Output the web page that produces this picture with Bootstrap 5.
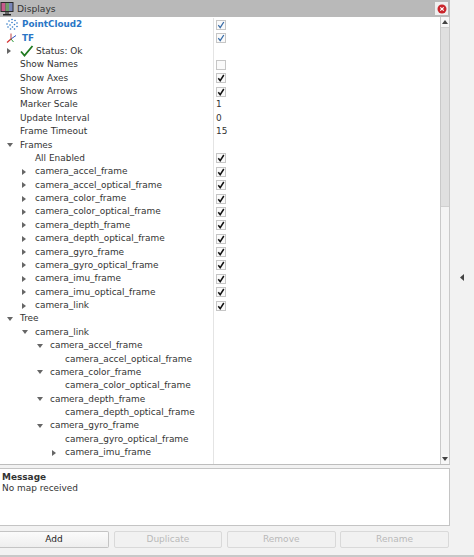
<!DOCTYPE html>
<html lang="en">
<head>
<meta charset="utf-8">
<title>Displays</title>
<link href="https://cdn.jsdelivr.net/npm/bootstrap@5.3.0/dist/css/bootstrap.min.css" rel="stylesheet">
<style>
html,body{height:557px;overflow:hidden}
body{background:#f2f2f2;font-family:"DejaVu Sans",sans-serif;font-size:8.95px;color:#333;line-height:13px}
.shell{height:557px}
.dock{width:450px}
.titlebar{height:17px;background:#b9b9b9}
.titletext{font-size:9.2px;color:#333;padding-left:3px}
.closebtn{width:13px;height:13px;background:#efefef;margin-right:2px}
.treebox{height:448px;background:#fff;border-bottom:1px solid #bdbdbd}
.treemain{width:440px;overflow:hidden;padding-top:1px}
.trow{height:13.38px;flex:none}
.namecol{width:214px;flex:none;border-right:1px solid #e4e4e4;height:100%;white-space:nowrap}
.treefill{flex:1 1 0;min-height:0}
.valcol{padding-left:2px}
.caretbox{width:10px;flex:none}
.lv0{padding-left:7px}.lv0n{padding-left:20px}
.lv1{padding-left:22px}.lv1n{padding-left:35px}
.lv2{padding-left:37px}.lv2n{padding-left:50px}
.lv3{padding-left:52px}.lv3n{padding-left:65px}
.dname{color:#2a76c6;font-weight:700;font-size:8.8px;padding-left:3px}
.cbox{width:10px;height:10px;border:1px solid #c6c6c6;background:#fafafa;display:flex;align-items:center;justify-content:center}
.scrollv{width:10px;background:#e3e3e3;border-left:1px solid #c9c9c9;border-right:1px solid #c9c9c9}
.sarrow{height:10px;background:#f7f7f7}
.sthumb{height:180px;background:#e0e0e0;border-top:1px solid #d0d0d0;border-bottom:1px solid #d0d0d0}
.strack{background:#f4f4f4}
.msgbox{height:58px;margin-top:3px;background:#fff;border:1px solid #c4c4c4;border-left:0;padding:3px 2px;line-height:10.5px}
.msghead{font-weight:700}
.btnrow{margin-top:5px;gap:4.5px;padding-right:1px}
.qbtn{height:17px;flex:1 1 0;padding:0;font-size:9px;line-height:13px;border:1px solid #c4c4c4;border-radius:2px;background:linear-gradient(#fbfbfb,#eeeeee);color:#222}
.qbtn:disabled{background:#f1f1f1;border-color:#d9d9d9;color:#b9b9b9;opacity:1}
.firstbtn{border-left:0;border-radius:0 2px 2px 0;flex:0 0 109px}
.sidebar{width:24px}
.footbar{height:2px;background:#c8c8c8;margin-top:auto}
</style>
</head>
<body>
<div class="shell d-flex flex-column">
<div class="d-flex flex-grow-1">
<div class="dock d-flex flex-column">
  <div class="titlebar d-flex align-items-center">
    <svg width="14" height="15" viewBox="0 0 14 15"><rect x="0.5" y="1" width="13" height="10" fill="#2b2b2b"/><rect x="1.5" y="2" width="4" height="8" fill="#c75b8c"/><rect x="5.5" y="2" width="3.5" height="8" fill="#6f9f6a"/><rect x="9" y="2" width="3.5" height="8" fill="#7a86b8"/><rect x="5" y="11" width="4" height="2" fill="#666"/><rect x="3" y="13" width="8" height="1.5" fill="#222"/></svg>
    <span class="titletext flex-grow-1">Displays</span>
    <span class="closebtn d-flex align-items-center justify-content-center"><svg width="10" height="10" viewBox="0 0 10 10"><circle cx="5" cy="5" r="4.5" fill="#c9252b"/><path d="M3.3 3.3l3.4 3.4M6.7 3.3l-3.4 3.4" stroke="#fff" stroke-width="1.2"/></svg></span>
  </div>
  <div class="treebox d-flex">
    <div class="treemain d-flex flex-column" id="tree"></div>
    <div class="scrollv d-flex flex-column">
      <div class="sarrow d-flex justify-content-center align-items-center"><svg width="6" height="4" viewBox="0 0 6 4"><path d="M0 4L3 0l3 4z" fill="#444"/></svg></div>
      <div class="sthumb"></div>
      <div class="strack flex-grow-1"></div>
      <div class="sarrow d-flex justify-content-center align-items-center"><svg width="6" height="4" viewBox="0 0 6 4"><path d="M0 0L3 4l3-4z" fill="#444"/></svg></div>
    </div>
  </div>
  <div class="msgbox"><div class="msghead">Message</div><div>No map received</div></div>
  <div class="btnrow d-flex">
    <button class="qbtn firstbtn" type="button">Add</button>
    <button class="qbtn" type="button" disabled>Duplicate</button>
    <button class="qbtn" type="button" disabled>Remove</button>
    <button class="qbtn" type="button" disabled>Rename</button>
  </div>
</div>
<div class="sidebar d-flex align-items-center justify-content-center"><svg width="4" height="7" viewBox="0 0 4 7"><path d="M4 0L0 3.5 4 7z" fill="#444"/></svg></div>
</div>
<div class="footbar"></div>
</div>
<script>
var R='<svg width="4" height="6" viewBox="0 0 4 6"><path d="M0 0l4 3L0 6z" fill="#666"/></svg>';
var D='<svg width="6" height="4" viewBox="0 0 6 4"><path d="M0 0h6L3 4z" fill="#666"/></svg>';
var CK='<svg width="8" height="8" viewBox="0 0 8 8"><path d="M1.3 4.2L3.2 6.6 6.8 1" fill="none" stroke="#111" stroke-width="1.5"/></svg>';
var CB='<svg width="8" height="8" viewBox="0 0 8 8"><path d="M1.3 4.2L3.2 6.6 6.8 1" fill="none" stroke="#3b6ea8" stroke-width="1.3"/></svg>';
function box(c){return '<span class="cbox">'+(c||'')+'</span>'}
var PC='<svg width="14" height="13" viewBox="0 0 14 13" fill="#2a76c6"><circle cx="7" cy="1.5" r=".8"/><circle cx="10" cy="2.5" r=".8"/><circle cx="4" cy="3" r=".8"/><circle cx="12" cy="5" r=".8"/><circle cx="7" cy="4.5" r=".8"/><circle cx="2" cy="6" r=".8"/><circle cx="9.5" cy="6.5" r=".8"/><circle cx="5" cy="7" r=".8"/><circle cx="12" cy="8.5" r=".8"/><circle cx="3" cy="9" r=".8"/><circle cx="7.5" cy="9" r=".8"/><circle cx="5.5" cy="11" r=".8"/><circle cx="9.5" cy="11" r=".8"/></svg>';
var TF='<svg width="14" height="13" viewBox="0 0 14 13" fill="none"><path d="M6 7L11 3.5" stroke="#3050c0" stroke-width="1"/><path d="M6 7L2 10.5" stroke="#d43030" stroke-width="1.2"/><path d="M6 7L6 1.5" stroke="#c04040" stroke-width="1"/><path d="M6 7L8.5 10" stroke="#2a9a3a" stroke-width="1"/></svg>';
var GC='<svg width="14" height="12" viewBox="0 0 14 12"><path d="M1 6.5L4.5 10.5 12.5 1" fill="none" stroke="#1f7a1f" stroke-width="1.8"/></svg>';
var rows=[
 ['d',PC,'PointCloud2',box(CB)],
 ['d',TF,'TF',box(CB)],
 ['s'],
 [0,'','Show Names',box()],
 [0,'','Show Axes',box(CK)],
 [0,'','Show Arrows',box(CK)],
 [0,'','Marker Scale','1'],
 [0,'','Update Interval','0'],
 [0,'','Frame Timeout','15'],
 [0,D,'Frames',''],
 [1,'','All Enabled',box(CK)]];
['accel','accel_optical','color','color_optical','depth','depth_optical','gyro','gyro_optical','imu','imu_optical'].forEach(function(n){rows.push([1,R,'camera_'+n+'_frame',box(CK)])});
rows.push([1,R,'camera_link',box(CK)]);
rows.push([0,D,'Tree','']);
rows.push([1,D,'camera_link','']);
['accel','color','depth','gyro'].forEach(function(a){rows.push([2,D,'camera_'+a+'_frame','']);rows.push([3,'','camera_'+a+'_optical_frame','']);});
rows.push([3,R,'camera_imu_frame','']);
var h='';
rows.forEach(function(r){
 var name,val='';
 if(r[0]==='d'){name='<div class="d-flex align-items-center h-100" style="padding-left:5px">'+r[1]+'<span class="dname">'+r[2]+'</span></div>';val=r[3];}
 else if(r[0]==='s'){name='<div class="d-flex align-items-center h-100 lv0"><span class="caretbox d-flex align-items-center" style="margin-right:3px">'+R+'</span><span class="d-flex" style="margin-right:2px">'+GC+'</span><span>Status: Ok</span></div>';}
 else{
  var l=r[0];
  if(r[1]){name='<div class="d-flex align-items-center h-100 lv'+l+'"><span class="caretbox d-flex align-items-center" style="margin-right:3px">'+r[1]+'</span><span>'+r[2]+'</span></div>';}
  else{var p=(l===3)?'lv3n':(l===1?'lv1n':'lv0n');name='<div class="d-flex align-items-center h-100 '+p+'"><span>'+r[2]+'</span></div>';}
  val=r[3];
 }
 h+='<div class="trow d-flex"><div class="namecol">'+name+'</div><div class="valcol d-flex align-items-center">'+val+'</div></div>';
});
h+='<div class="namecol treefill"></div>';
document.getElementById('tree').innerHTML=h;
</script>
<script src="https://cdn.jsdelivr.net/npm/bootstrap@5.3.0/dist/js/bootstrap.bundle.min.js"></script>
</body>
</html>
